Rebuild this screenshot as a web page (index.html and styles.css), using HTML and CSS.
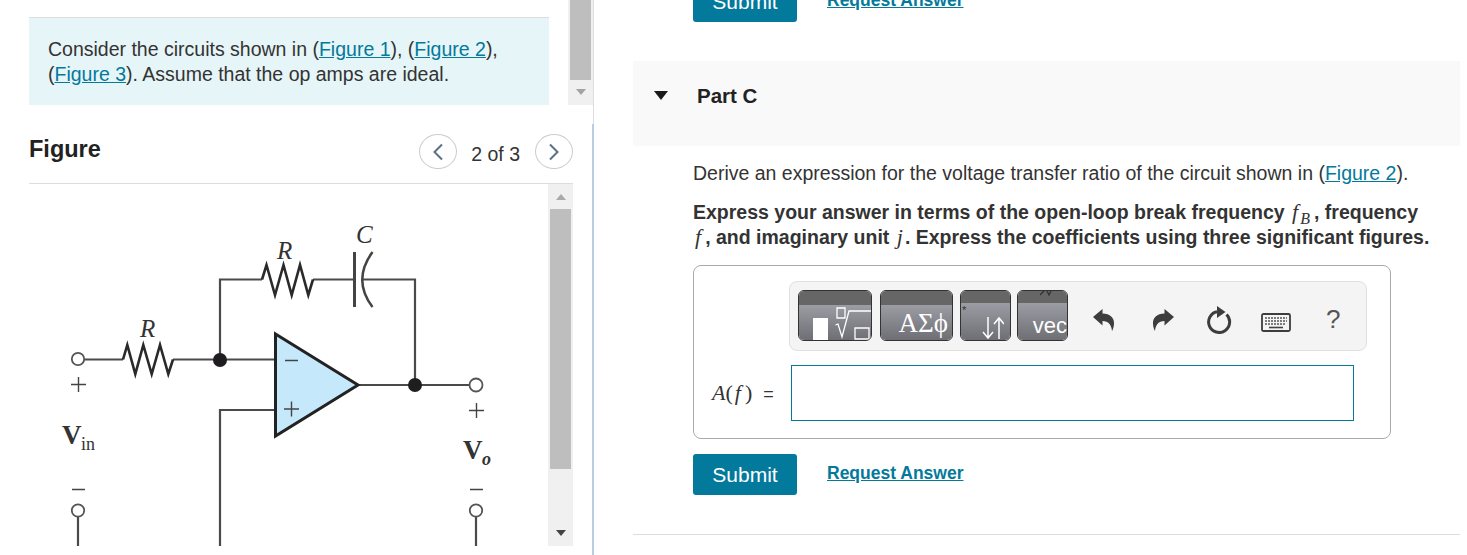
FILE: index.html
```html
<!DOCTYPE html>
<html lang="en">
<head>
    <meta charset="UTF-8">
    <title>Part C</title>
    <link rel="stylesheet" href="styles.css">
</head>
<body>
    <div class="page">
        <div class="left-col">
            <div class="intro-row">
                <div class="intro-box">
                    Consider the circuits shown in (<a href="#">Figure 1</a>), (<a href="#">Figure 2</a>),<br>
                    (<a href="#">Figure 3</a>). Assume that the op amps are ideal.
                </div>
                <div class="scrollbar intro-scroll">
                    <div class="thumb"></div>
                    <div class="arrow-down gray"></div>
                </div>
            </div>
            <div class="figure-panel">
                <div class="figure-head">
                    <h2>Figure</h2>
                    <div class="pager">
                        <button class="pager-btn"><svg width="12" height="18" viewBox="0 0 12 18"><path d="M10 1.500 L2.500 9 L10 16.500" fill="none" stroke="#5a7184" stroke-width="2"/></svg></button>
                        <span class="pager-text">2 of 3</span>
                        <button class="pager-btn"><svg width="12" height="18" viewBox="0 0 12 18"><path d="M2 1.500 L9.500 9 L2 16.500" fill="none" stroke="#5a7184" stroke-width="2"/></svg></button>
                    </div>
                </div>
                <div class="figure-body">
                    <svg class="circuit" width="519" height="362" viewBox="29 184 519 362">
                        <g fill="none" stroke="#4a4a4a" stroke-width="2.200">
                            <path d="M84 359.500 H123 M173 359.500 H275 M220 360 V279.500 H262 M313 279.500 H353 M362 279.500 H415 V385 M358 385 H470"/>
                            <path d="M275 410 H220 V546 M78 516 V546 M476 516 V546"/>
                        </g>
                        <g fill="none" stroke="#2a2a2a" stroke-width="2.600">
                            <path d="M123 359.500 L127.300 345 L135.300 374 L143.300 345 L151.700 374 L160 345 L168.300 374 L173 359.500"/>
                            <path d="M262 279.500 L266.500 265 L275 295 L283.500 265 L291.700 295 L300 265 L308.300 295 L313 279.500"/>
                        </g>
                        <path d="M354.500 252 V307" stroke="#444" stroke-width="3" fill="none"/>
                        <path d="M372.500 252 Q352 280 372.500 307" stroke="#444" stroke-width="2.500" fill="none"/>
                        <path d="M275.500 334 L358 385 L275.500 436 Z" fill="#c5e8fb" stroke="#222" stroke-width="3"/>
                        <g fill="#1f1d20">
                            <circle cx="220" cy="360" r="7"/>
                            <circle cx="415" cy="385" r="7"/>
                        </g>
                        <g fill="#fff" stroke="#555" stroke-width="1.800">
                            <circle cx="78" cy="359" r="6.200"/>
                            <circle cx="78" cy="510.500" r="6.200"/>
                            <circle cx="476" cy="385" r="6.500"/>
                            <circle cx="476" cy="510.500" r="6.200"/>
                        </g>
                        <g stroke="#444" stroke-width="1.400">
                            <path d="M71 384.500 H86 M78.500 377 V392"/>
                            <path d="M469 410.500 H484 M476.500 403 V418"/>
                            <path d="M72 489.500 H85 M470 489.500 H483"/>
                            <path d="M285 360.500 H298 M284 409 H299 M291.500 401.500 V416.500"/>
                        </g>
                        <g class="lbl-italic">
                            <text x="140" y="337">R</text>
                            <text x="277" y="259">R</text>
                            <text x="356" y="243">C</text>
                        </g>
                        <text class="lbl-bold" x="62" y="444">V</text>
                        <text class="lbl-sub" x="81" y="450">in</text>
                        <text class="lbl-bold" x="463" y="459">V</text>
                        <text class="lbl-sub-i" x="482" y="465">o</text>
                    </svg>
                    <div class="scrollbar figure-scroll">
                        <div class="arrow-up"></div>
                        <div class="thumb"></div>
                        <div class="arrow-down"></div>
                    </div>
                </div>
            </div>
        </div>

        <div class="right-col">
            <div class="actions top-actions">
                <button class="submit">Submit</button>
                <a href="#" class="request">Request Answer</a>
            </div>
            <div class="part-head">
                <span class="caret"></span>
                <strong>Part C</strong>
            </div>
            <div class="part-body">
                <p class="question">Derive an expression for the voltage transfer ratio of the circuit shown in (<a href="#">Figure 2</a>).</p>
                <p class="instruct">Express your answer in terms of the open-loop break frequency <span class="math var-f">f<sub>B</sub></span>, frequency<br><span class="math var-f">f</span>, and imaginary unit <span class="math var-j">j</span>. Express the coefficients using three significant figures.</p>
                <div class="answer-box">
                    <div class="toolbar">
                        <div class="tool-btn btn-templates">
                            <div class="strip"></div>
                            <div class="tool-face templates">
                                <span class="block"></span>
                                <svg width="36" height="33" viewBox="0 0 36 33"><path d="M2 1 H10 V11 H2 Z M0.500 18 L3 17 L7 30 L14 4 H36 M20 21 H34 V32 H20 Z" fill="none" stroke="#fff" stroke-width="1.300"/></svg>
                            </div>
                        </div>
                        <div class="tool-btn btn-greek">
                            <div class="strip"></div>
                            <div class="tool-face greek">ΑΣϕ</div>
                        </div>
                        <div class="tool-btn btn-arrows">
                            <div class="strip short"></div>
                            <div class="tool-face arrows">
                                <span class="star">*</span>
                                <svg width="22" height="24" viewBox="0 0 22 24"><path d="M6 1 V22 M1 16 L6 22 L11 16 M17 23 V2 M12 8 L17 2 L22 8" fill="none" stroke="#fff" stroke-width="1.500"/></svg>
                            </div>
                        </div>
                        <div class="tool-btn btn-vec">
                            <div class="strip short"><svg class="cut-glyph" width="12" height="5" viewBox="0 0 12 5"><path d="M0 4 L4 0 M7 0 L9 4 L11 0" fill="none" stroke="#333" stroke-width="1.300"/></svg></div>
                            <div class="tool-face vec">vec</div>
                        </div>
                        <div class="tool-icons">
                            <svg class="ic-undo" width="22" height="24" viewBox="0 0 22 24"><path d="M0 9 L9.500 1 V5.500 C17 5.500 21.500 10 21 16 C20.800 19 20 21.500 19 23 C18.500 17 15.500 13 9.500 13 V17.500 Z" fill="#3d3d3d"/></svg>
                            <svg class="ic-redo" width="22" height="24" viewBox="0 0 22 24"><path d="M22 9 L12.500 1 V5.500 C5 5.500 0.500 10 1 16 C1.200 19 2 21.500 3 23 C3.500 17 6.500 13 12.500 13 V17.500 Z" fill="#3d3d3d"/></svg>
                            <svg class="ic-reload" width="26" height="28" viewBox="0 0 26 28"><path d="M20.500 8.500 A10.500 10.500 0 1 1 11 5.700" fill="none" stroke="#3d3d3d" stroke-width="3"/><path d="M11 0 L19.500 6 L11 12 Z" fill="#3d3d3d"/></svg>
                            <svg class="ic-keys" width="30" height="19" viewBox="0 0 30 19"><rect x="1" y="1" width="28" height="17" rx="1.500" fill="none" stroke="#3d3d3d" stroke-width="1.800"/><path d="M4 5 H26 M4 8 H26 M4 11 H24" stroke="#555" stroke-width="1.600" stroke-dasharray="2 1"/><path d="M8 14.500 H22" stroke="#444" stroke-width="1.600"/></svg>
                            <span class="help">?</span>
                        </div>
                    </div>
                    <div class="answer-row">
                        <label><span class="math">A</span><span class="paren">(</span><span class="math var-f">f</span><span class="paren">)</span><span class="eq">=</span></label>
                        <input type="text" class="answer-input">
                    </div>
                </div>
                <div class="actions">
                    <button class="submit">Submit</button>
                    <a href="#" class="request">Request Answer</a>
                </div>
            </div>
            <div class="part-end"></div>
        </div>
    </div>
</body>
</html>
```

FILE: styles.css
```css
* { margin: 0; padding: 0; box-sizing: border-box; }
html, body { height: 100%; overflow: hidden; background: #fff; }
body {
    font-family: "Liberation Sans", Arial, sans-serif;
    font-size: 19.500px;
    line-height: 25px;
    color: #333;
}
a { color: #03799c; }

.page { display: flex; height: 555px; overflow: hidden; }

/* left column */
.left-col { width: 594px; flex: none; }
.intro-row {
    display: flex;
    justify-content: space-between;
    height: 124px;
    padding-left: 29px;
    border-right: 1px solid #ddd;
}
.intro-box {
    width: 520px;
    height: 88px;
    margin-top: 17px;
    padding: 19px 19px 0;
    background: #e6f5f7;
    border-top: 1px solid #ddd;
}
.scrollbar { background: #f0f0f0; display: flex; flex-direction: column; align-items: center; }
.scrollbar .thumb { background: #bebebe; width: 21px; }
.intro-scroll { width: 25px; height: 105px; }
.intro-scroll .thumb { height: 80px; }
.arrow-down, .arrow-up {
    width: 0; height: 0;
    border-left: 5.500px solid transparent;
    border-right: 5.500px solid transparent;
}
.arrow-down { border-top: 6px solid #444; }
.arrow-up { border-bottom: 6px solid #aaa; }
.arrow-down.gray { border-top-color: #a3a3a3; margin-top: 9px; }

.figure-panel {
    height: 431px;
    padding-left: 29px;
    border-right: 2px solid #b9cde0;
}
.figure-head {
    display: flex;
    justify-content: space-between;
    width: 544px;
    height: 60px;
    border-bottom: 1px solid #ddd;
}
.figure-head h2 { font-size: 23.500px; line-height: 50px; color: #222; }
.pager { display: flex; gap: 14px; align-items: flex-start; padding-top: 10px; line-height: 40px; }
.pager-text { margin-right: 1px; }
.pager-btn {
    width: 38px; height: 35px;
    background: #fff;
    border: 1px solid #ccc;
    border-radius: 50%;
    display: flex; align-items: center; justify-content: center;
}
.figure-body { display: flex; height: 362px; }
.circuit { display: block; flex: none; }
.figure-scroll { width: 25px; }
.figure-scroll .arrow-up { margin-top: 10px; }
.figure-scroll .thumb { height: 260px; margin-top: 9px; }
.figure-scroll .arrow-down { margin-top: 61px; }
.lbl-italic { font: italic 25px "Liberation Serif", serif; fill: #333; }
.lbl-bold { font: bold 27px "Liberation Serif", serif; fill: #333; }
.lbl-sub { font: 18px "Liberation Serif", serif; fill: #333; }
.lbl-sub-i { font: italic bold 18px "Liberation Serif", serif; fill: #333; }

/* right column */
.right-col { width: 827px; margin-left: 39px; flex: none; }
.actions { display: flex; align-items: center; gap: 30px; }
.top-actions { margin-top: -19px; height: 41px; padding-left: 60px; }
.submit {
    width: 104px; height: 41px;
    background: #03799c;
    color: #fff;
    border: none;
    border-radius: 3px;
    font: 21px "Liberation Sans", Arial, sans-serif;
}
.request { font-weight: bold; font-size: 17.500px; position: relative; top: -1px; }
.part-head {
    display: flex;
    align-items: flex-start;
    height: 85px;
    margin-top: 39px;
    padding: 22px 0 0 21px;
    background: #f9f9f9;
    color: #222;
}
.part-head strong { font-size: 20.500px; }
.caret {
    width: 0; height: 0;
    margin: 8px 29px 0 0;
    border-left: 7.500px solid transparent;
    border-right: 7.500px solid transparent;
    border-top: 9px solid #1a1a1a;
}
.part-body { padding: 15px 0 0 60px; }
.question { margin-bottom: 14px; }
.instruct { font-weight: bold; margin-bottom: 15px; }
.math {
    font-family: "Liberation Serif", serif;
    font-style: italic;
    font-weight: normal;
    font-size: 22px;
    line-height: 0;
}
.math sub { font-size: 16px; line-height: 0; margin-left: 2px; }
.var-f { padding: 0 4px 0 2px; }
.var-j { padding: 0 2px; }

.answer-box {
    width: 698px;
    height: 174px;
    padding: 15px 23px 0 95px;
    border: 1px solid #aaa;
    border-radius: 8px;
    margin-bottom: 15px;
}
.toolbar {
    display: flex;
    height: 70px;
    padding: 8px 0 0 8px;
    background: #f4f4f4;
    border: 1px solid #e0e0e0;
    border-radius: 8px;
}
.tool-btn {
    height: 51px;
    display: flex; flex-direction: column;
    border: 1px solid #333;
    border-radius: 6px;
    overflow: hidden;
}
.btn-templates { width: 74px; margin-right: 8px; }
.btn-greek { width: 73px; margin-right: 7px; }
.btn-arrows { width: 51px; margin-right: 6px; }
.btn-vec { width: 51px; margin-right: 25px; }
.strip { height: 14px; background: #666; flex: none; }
.strip.short { height: 12px; display: flex; justify-content: center; align-items: flex-start; }
.cut-glyph { margin-left: 6px; }
.tool-face {
    flex: 1;
    display: flex;
    align-items: flex-end;
    justify-content: flex-end;
    background: linear-gradient(#9c9ca4, #6e6e74);
    color: #fff;
    overflow: hidden;
}
.templates .block { width: 15px; height: 22px; background: #fff; margin-right: 7px; }
.greek { font: 27px/33px "Liberation Serif", serif; padding-right: 4px; }
.arrows { justify-content: space-between; padding-right: 6px; }
.arrows .star { align-self: flex-start; color: #333; font-size: 11px; line-height: 14px; margin-left: 1px; }
.vec { font-size: 22px; line-height: 28px; }
.tool-icons { display: flex; align-items: center; height: 59px; }
.ic-undo { margin-right: 37px; }
.ic-redo { margin-right: 32px; }
.ic-reload { margin-right: 29px; }
.ic-keys { margin-right: 35px; margin-top: 6px; }
.help { font-size: 26px; color: #555; }

.answer-row { display: flex; align-items: center; margin: 14px 0 0 -77px; }
.answer-row label { width: 79px; flex: none; font-size: 18px; white-space: nowrap; }
.answer-row .paren { font: 22px "Liberation Serif", serif; }
.answer-row .eq { margin-left: 11px; }
.answer-input {
    width: 563px; height: 56px;
    border: 1px solid #03799c;
    background: #fff;
}
.part-end { margin-top: 39px; border-top: 1px solid #ddd; }
```
